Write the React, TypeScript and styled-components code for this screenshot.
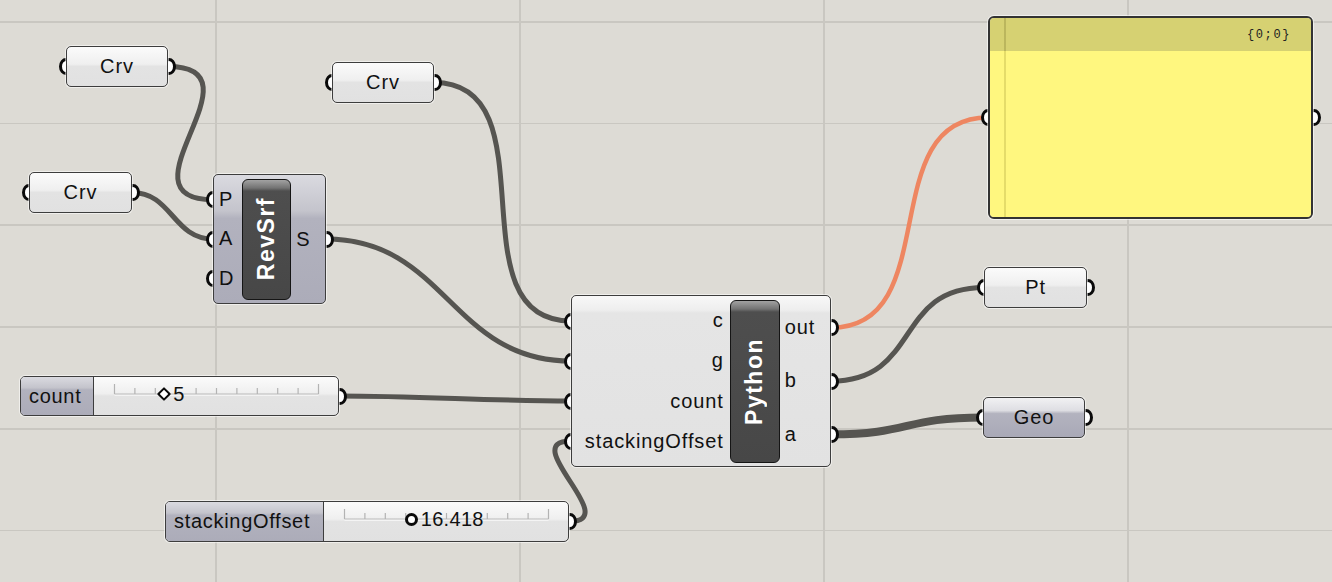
import React from "react";
import styled, { createGlobalStyle } from "styled-components";

type Box = { x: number; y: number; w: number; h: number };
type Pt = [number, number];
type Tone = "light" | "steel" | "geo" | "component";

const FONT = `"Liberation Sans", Arial, Helvetica, sans-serif`;
const EDGE = "#3d3d3d";
const WIRE = "#565551";
const ORANGE = "#ee8661";

// node geometry on the canvas
const crvA: Box = { x: 66, y: 46, w: 102, h: 41 };
const crvB: Box = { x: 29, y: 172, w: 103, h: 41 };
const crvC: Box = { x: 332, y: 62, w: 102, h: 41 };
const revSrf: Box = { x: 213, y: 174, w: 113, h: 130 };
const python: Box = { x: 571, y: 295, w: 260, h: 172 };
const countSlider: Box = { x: 20, y: 376, w: 319, h: 40 };
const offsetSlider: Box = { x: 165, y: 501, w: 404, h: 41 };
const panel: Box = { x: 988, y: 16, w: 325, h: 203 };
const ptParam: Box = { x: 984, y: 267, w: 103, h: 41 };
const geoParam: Box = { x: 983, y: 397, w: 102, h: 41 };

const PAD = 6;
const BORDER = 1.75;
const portY = (h: number, n: number, i: number) => PAD + ((h - 2 * PAD) / n) * (i + 0.5);
const inPt = (b: Box, n = 1, i = 0): Pt => [b.x, b.y + portY(b.h, n, i)];
const outPt = (b: Box, n = 1, i = 0): Pt => [b.x + b.w, b.y + portY(b.h, n, i)];

const wires = [
  { from: outPt(crvA), to: inPt(revSrf, 3, 0), d: 100 },
  { from: outPt(crvB), to: inPt(revSrf, 3, 1), d: 40 },
  { from: outPt(revSrf), to: inPt(python, 4, 1), d: 120 },
  { from: outPt(crvC), to: inPt(python, 4, 0), d: 120 },
  { from: outPt(countSlider), to: inPt(python, 4, 2), d: 80 },
  { from: outPt(offsetSlider), to: inPt(python, 4, 3), d: 55 },
  { from: outPt(python, 3, 0), to: inPt(panel), d: 115, color: ORANGE, width: 4.5 },
  { from: outPt(python, 3, 1), to: inPt(ptParam), d: 90 },
  { from: outPt(python, 3, 2), to: inPt(geoParam), d: 80, width: 8 },
];

const tones: Record<Tone, string> = {
  light: "linear-gradient(#fbfbfb 0%, #efefef 44%, #e3e3e3 50%, #e1e1e1 100%)",
  steel: "linear-gradient(#dadae0 0%, #c4c4cc 28%, #b2b2be 34%, #acacb9 100%)",
  geo: "linear-gradient(#f1f1f3 0%, #dedee3 32%, #b3b3bf 40%, #a9a9b7 100%)",
  component: "linear-gradient(#f8f8f8 0px, #eeeeee 14px, #e5e5e5 17px, #e2e2e2 100%)",
};

const GlobalStyle = createGlobalStyle`
  html, body {
    margin: 0;
    padding: 0;
    background: #dddbd5;
  }
  body {
    font-family: ${FONT};
  }
`;

const Canvas = styled.div`
  position: relative;
  width: 1332px;
  height: 582px;
  overflow: hidden;
  background-color: #dddbd5;
  background-image:
    repeating-linear-gradient(90deg, transparent 0 215px, #c9c7c1 215px 217px, transparent 217px 304px),
    repeating-linear-gradient(180deg, transparent 0 20.8px, #c9c7c1 20.8px 22.6px, transparent 22.6px 101.75px);
`;

const WireLayer = styled.svg`
  position: absolute;
  left: 0;
  top: 0;
`;

const Node = styled.div<{ $box: Box }>`
  position: absolute;
  left: ${(p) => p.$box.x}px;
  top: ${(p) => p.$box.y}px;
  width: ${(p) => p.$box.w}px;
  height: ${(p) => p.$box.h}px;
`;

const Grip = styled.span<{ $side: "in" | "out"; $y: number }>`
  position: absolute;
  top: ${(p) => p.$y - 8.5}px;
  ${(p) => (p.$side === "in" ? "left: -7.5px;" : "right: -7.5px;")}
  width: 14px;
  height: 17px;
  box-sizing: border-box;
  border: 3.5px solid #0a0a0a;
  border-radius: 50%;
  background: #ffffff;
`;

const Body = styled.div<{ $tone: Tone }>`
  position: relative;
  z-index: 1;
  box-sizing: border-box;
  height: 100%;
  border: ${BORDER}px solid ${EDGE};
  border-radius: 5px;
  background: ${(p) => tones[p.$tone]};
  box-shadow: 0 0 0 1px rgba(255, 255, 255, 0.55);
  color: #111;
  font-size: 20px;
  letter-spacing: 0.9px;
`;

const ParamBody = styled(Body)`
  display: flex;
  align-items: center;
  justify-content: center;
`;

const ComponentBody = styled(Body)`
  display: flex;
`;

const PortColumn = styled.div<{ $align: "start" | "end"; $w?: number }>`
  display: flex;
  flex-direction: column;
  box-sizing: border-box;
  padding: ${PAD - BORDER}px 0;
  ${(p) => (p.$w ? `width: ${p.$w}px; flex: none;` : "flex: 1;")}
  ${(p) => (p.$align === "end" ? "padding-right: 6px;" : "padding-left: 5px;")}
`;

const PortLabel = styled.div<{ $align: "start" | "end" }>`
  flex: 1;
  display: flex;
  align-items: center;
  justify-content: ${(p) => (p.$align === "end" ? "flex-end" : "flex-start")};
  white-space: nowrap;
`;

const Tab = styled.div<{ $w: number }>`
  flex: none;
  width: ${(p) => p.$w}px;
  margin: 3.5px 0;
  box-sizing: border-box;
  border: 1.75px solid #151515;
  border-radius: 6px;
  background: linear-gradient(#a2a2a2 0px, #737373 8px, #4e4e4e 11px, #474747 100%);
  display: flex;
  align-items: center;
  justify-content: center;
`;

const TabLabel = styled.span`
  writing-mode: vertical-rl;
  transform: rotate(180deg);
  color: #ffffff;
  font-weight: 700;
  font-size: 23px;
  letter-spacing: 1.5px;
`;

const SliderBody = styled(Body)`
  display: flex;
  overflow: hidden;
`;

const SliderName = styled.div<{ $w: number }>`
  flex: none;
  width: ${(p) => p.$w}px;
  box-sizing: border-box;
  border-right: ${BORDER}px solid ${EDGE};
  background: ${tones.steel};
  display: flex;
  align-items: center;
  padding-left: 8px;
  letter-spacing: 0.7px;
`;

const SliderTrack = styled.div`
  position: relative;
  flex: 1;
`;

const TickLayer = styled.svg`
  position: absolute;
  left: 0;
  top: 0;
`;

const KnobRow = styled.div`
  position: absolute;
  top: 7px;
  height: 20px;
  display: flex;
  align-items: center;
  gap: 3px;
  letter-spacing: 0.3px;
`;

const Knob = styled.span<{ $shape: "diamond" | "circle" }>`
  flex: none;
  box-sizing: border-box;
  background: #ffffff;
  border: ${(p) => (p.$shape === "circle" ? "3.5px" : "2.5px")} solid #0a0a0a;
  width: ${(p) => (p.$shape === "circle" ? 13 : 10)}px;
  height: ${(p) => (p.$shape === "circle" ? 13 : 10)}px;
  border-radius: ${(p) => (p.$shape === "circle" ? "50%" : "1px")};
  transform: ${(p) => (p.$shape === "diamond" ? "rotate(45deg)" : "none")};
  margin-right: ${(p) => (p.$shape === "diamond" ? 1 : 0)}px;
`;

const PanelBody = styled.div`
  position: relative;
  z-index: 1;
  box-sizing: border-box;
  height: 100%;
  display: flex;
  flex-direction: column;
  border: 2px solid #333333;
  border-radius: 6px;
  overflow: hidden;
  box-shadow: 0 0 0 1px rgba(255, 255, 255, 0.6);
`;

const PanelHeader = styled.div`
  flex: none;
  height: 33px;
  display: flex;
  align-items: center;
  justify-content: flex-end;
  padding-right: 20px;
  background:
    linear-gradient(90deg, transparent 14px, rgba(90, 85, 20, 0.22) 14px 16px, transparent 16px),
    #d6d172;
  font-family: "Liberation Mono", "DejaVu Sans Mono", monospace;
  font-size: 12px;
  letter-spacing: 1.6px;
  color: #222;
`;

const PanelContent = styled.div`
  flex: 1;
  background:
    linear-gradient(90deg, transparent 14px, rgba(150, 140, 40, 0.25) 14px 15.5px, transparent 15.5px),
    #fff77f;
`;

// ---------------------------------------------------------------------------

const wirePath = (from: Pt, to: Pt, d: number) =>
  `M ${from[0]} ${from[1]} C ${from[0] + d} ${from[1]}, ${to[0] - d} ${to[1]}, ${to[0]} ${to[1]}`;

const Param = ({ box, label, tone = "light" }: { box: Box; label: string; tone?: Tone }) => (
  <Node $box={box}>
    <Grip $side="in" $y={box.h / 2} />
    <Grip $side="out" $y={box.h / 2} />
    <ParamBody $tone={tone}>{label}</ParamBody>
  </Node>
);

type ComponentProps = {
  box: Box;
  name: string;
  inputs: string[];
  outputs: string[];
  inputAlign: "start" | "end";
  inputWidth?: number;
  tabWidth: number;
  outputWidth: number;
  tone: Tone;
};

const Component = ({ box, name, inputs, outputs, inputAlign, inputWidth, tabWidth, outputWidth, tone }: ComponentProps) => (
  <Node $box={box}>
    {inputs.map((p, i) => (
      <Grip key={`i${p}`} $side="in" $y={portY(box.h, inputs.length, i)} />
    ))}
    {outputs.map((p, i) => (
      <Grip key={`o${p}`} $side="out" $y={portY(box.h, outputs.length, i)} />
    ))}
    <ComponentBody $tone={tone}>
      <PortColumn $align={inputAlign} $w={inputWidth}>
        {inputs.map((p) => (
          <PortLabel key={p} $align={inputAlign}>{p}</PortLabel>
        ))}
      </PortColumn>
      <Tab $w={tabWidth}>
        <TabLabel>{name}</TabLabel>
      </Tab>
      <PortColumn $align="start" $w={outputWidth}>
        {outputs.map((p) => (
          <PortLabel key={p} $align="start">{p}</PortLabel>
        ))}
      </PortColumn>
    </ComponentBody>
  </Node>
);

const TICK_START = 20.5;
const TICK_END = 224.5;
const TRACK_Y = 17;

const Ticks = () => {
  const n = 10;
  const step = (TICK_END - TICK_START) / n;
  return (
    <TickLayer width={244} height={40}>
      <line x1={TICK_START} y1={TRACK_Y + 1} x2={TICK_END} y2={TRACK_Y + 1} stroke="#ffffff" strokeWidth={1} />
      <line x1={TICK_START} y1={TRACK_Y} x2={TICK_END} y2={TRACK_Y} stroke="#b9b9b9" strokeWidth={1.2} />
      {Array.from({ length: n + 1 }, (_, i) => {
        const x = TICK_START + i * step;
        const tall = i === 0 || i === n;
        return <line key={i} x1={x} y1={TRACK_Y} x2={x} y2={TRACK_Y - (tall ? 10 : 6)} stroke="#b3b3b3" strokeWidth={1.2} />;
      })}
    </TickLayer>
  );
};

const Slider = ({ box, name, nameWidth, value, knobX, knob }: { box: Box; name: string; nameWidth: number; value: string; knobX: number; knob: "diamond" | "circle" }) => (
  <Node $box={box}>
    <Grip $side="out" $y={box.h / 2} />
    <SliderBody $tone="light">
      <SliderName $w={nameWidth}>{name}</SliderName>
      <SliderTrack>
        <Ticks />
        <KnobRow style={{ left: knobX - (knob === "circle" ? 6.5 : 5) }}>
          <Knob $shape={knob} />
          <span>{value}</span>
        </KnobRow>
      </SliderTrack>
    </SliderBody>
  </Node>
);

const Panel = ({ box, path }: { box: Box; path: string }) => (
  <Node $box={box}>
    <Grip $side="in" $y={box.h / 2} />
    <Grip $side="out" $y={box.h / 2} />
    <PanelBody>
      <PanelHeader>{path}</PanelHeader>
      <PanelContent />
    </PanelBody>
  </Node>
);

const App = () => (
  <>
    <GlobalStyle />
    <Canvas>
      <WireLayer width={1332} height={582}>
        {wires.map((w, i) => (
          <path
            key={i}
            d={wirePath(w.from, w.to, w.d)}
            fill="none"
            stroke={w.color ?? WIRE}
            strokeWidth={w.width ?? 5}
            strokeLinecap="round"
          />
        ))}
      </WireLayer>

      <Param box={crvA} label="Crv" />
      <Param box={crvB} label="Crv" />
      <Param box={crvC} label="Crv" />

      <Component
        box={revSrf}
        name="RevSrf"
        inputs={["P", "A", "D"]}
        outputs={["S"]}
        inputAlign="start"
        inputWidth={28.25}
        tabWidth={49}
        outputWidth={32}
        tone="steel"
      />

      <Component
        box={python}
        name="Python"
        inputs={["c", "g", "count", "stackingOffset"]}
        outputs={["out", "b", "a"]}
        inputAlign="end"
        tabWidth={50}
        outputWidth={50.25}
        tone="component"
      />

      <Slider box={countSlider} name="count" nameWidth={73.25} value="5" knobX={70} knob="diamond" />
      <Slider box={offsetSlider} name="stackingOffset" nameWidth={158.25} value="16.418" knobX={87} knob="circle" />

      <Panel box={panel} path="{0;0}" />
      <Param box={ptParam} label="Pt" />
      <Param box={geoParam} label="Geo" tone="geo" />
    </Canvas>
  </>
);

export default App;
